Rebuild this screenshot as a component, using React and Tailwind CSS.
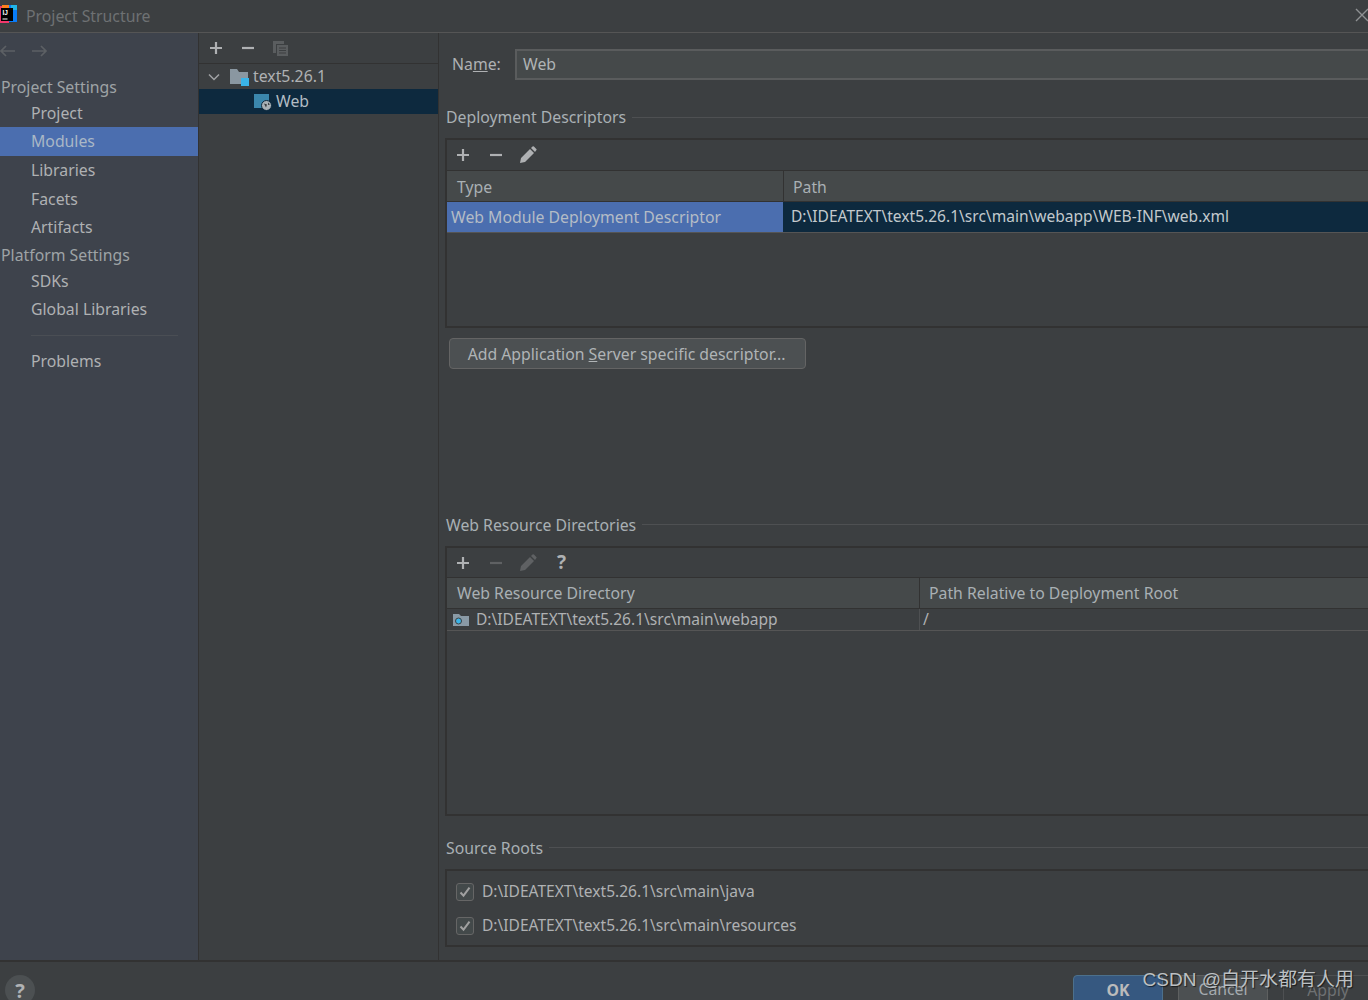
import React from 'react';

const FONT = 'font-["Noto_Sans","Open_Sans",sans-serif]';

const Plus = ({ dim }) => (
    <svg width="16" height="16" viewBox="0 0 16 16" className={dim ? 'opacity-40' : ''}>
        <path d="M8 2v12M2 8h12" stroke="#afb1b3" strokeWidth="2.2" fill="none" />
    </svg>
);

const Minus = ({ dim }) => (
    <svg width="16" height="16" viewBox="0 0 16 16" className={dim ? 'opacity-30' : ''}>
        <path d="M2 8h12" stroke="#afb1b3" strokeWidth="2.2" fill="none" />
    </svg>
);

const Pencil = ({ dim }) => (
    <svg width="18" height="18" viewBox="0 0 18 18" className={`-ml-[2px] ${dim ? 'opacity-30' : ''}`}>
        <path d="M1 17l1-5L11 3l4 4-9 9z M12 2l1.5-1.5a1 1 0 0 1 1.4 0l2.4 2.4a1 1 0 0 1 0 1.4L16 6z" fill="#afb1b3" />
    </svg>
);

const Check = () => (
    <div className="flex h-[18px] w-[18px] items-center justify-center rounded-[3px] border border-[#666666] bg-[#43494a]">
        <svg width="12" height="12" viewBox="0 0 12 12">
            <path d="M1.5 6.5l3 3.2 6-8" stroke="#a0a0a0" strokeWidth="2" fill="none" />
        </svg>
    </div>
);

const SectionTitle = ({ title, className = '', textClass = 'pt-[3px]' }) => (
    <div className={`flex h-5 items-center pl-px text-[#a9b0b4] ${className}`}>
        <span className={textClass}>{title}</span>
        <div className="ml-[6px] h-px flex-1 bg-[#4e5052]" />
    </div>
);

const NavItem = ({ label, active, h = 'h-[29px]', className = '' }) => (
    <div className={`flex items-center pl-[31px] pt-[1px] ${h} ${className} ${active ? 'bg-[#4b6eaf] text-[#a9b7c6]' : 'text-[#afb1b3]'}`}>{label}</div>
);

const NavHead = ({ label, h }) => (
    <div className={`flex items-end pl-px text-[#9ea3a6] ${h}`}>{label}</div>
);

export default function App() {
    return (
        <div className={`relative flex h-[1000px] w-[1368px] flex-col overflow-hidden bg-[#3c3f41] text-[15.8px] ${FONT}`}>
            {/* title bar */}
            <div className="flex h-[33px] shrink-0 items-center border-b border-[#555555] bg-[#3c3f41]">
                <svg width="18" height="20" viewBox="0 0 18 20" className="-mt-[5px] shrink-0">
                    <path d="M0 2h9v17H0z" fill="#f0386b" />
                    <path d="M2 1h8v4H2z" fill="#fc801d" />
                    <path d="M9 1h8v17H9z" fill="#087cfa" />
                    <path d="M11 1h6v5h-6z" fill="#21b5e8" />
                    <rect x="1" y="4" width="12" height="13" fill="#000000" />
                    <text x="2.5" y="10.500" fontSize="6.5" fontWeight="700" fill="#ffffff" fontFamily="Liberation Sans, sans-serif">IJ</text>
                    <path d="M2.500 14.500h5v1h-5z" fill="#ffffff" />
                </svg>
                <span className="ml-2 pt-[1px] text-[#6e7173]">Project Structure</span>
                <svg width="14" height="14" viewBox="0 0 14 14" className="ml-auto -mr-[1px] -mt-[2px]">
                    <path d="M1 1l12 12M13 1L1 13" stroke="#8f9193" strokeWidth="1.4" fill="none" />
                </svg>
            </div>

            <div className="flex min-h-0 flex-1">
                {/* left nav */}
                <div className="w-[198px] shrink-0 bg-[#3e434c]">
                    <div className="-ml-px flex h-[36px] items-center gap-[15px] pb-[1px]">
                        <svg width="17" height="14" viewBox="0 0 17 14">
                            <path d="M16 7H2M7 2L2 7l5 5" stroke="#5c6064" strokeWidth="1.7" fill="none" />
                        </svg>
                        <svg width="17" height="14" viewBox="0 0 17 14">
                            <path d="M1 7h14M10 2l5 5-5 5" stroke="#5c6064" strokeWidth="1.7" fill="none" />
                        </svg>
                    </div>
                    <NavHead label="Project Settings" h="h-[31px]" />
                    <NavItem label="Project" h="h-[27px]" />
                    <NavItem label="Modules" active />
                    <NavItem label="Libraries" />
                    <NavItem label="Facets" />
                    <NavItem label="Artifacts" h="h-[27px]" />
                    <NavHead label="Platform Settings" h="h-[27px]" />
                    <NavItem label="SDKs" h="h-[26px]" />
                    <NavItem label="Global Libraries" h="h-[31px]" />
                    <div className="ml-[31px] mr-[20px] mt-[10px] h-px bg-[#4a4e54]" />
                    <NavItem label="Problems" className="mt-[11px]" />
                </div>

                {/* module tree */}
                <div className="w-[241px] shrink-0 border-x border-[#323232] bg-[#3c3f41]">
                    <div className="flex h-[31px] items-center gap-4 border-b border-[#323232] pl-[9px]">
                        <Plus />
                        <Minus />
                        <svg width="17" height="17" viewBox="0 0 17 17">
                            <path d="M1 1h11v3H4v9H1z" fill="#5a5d5f" />
                            <path d="M5 5h11v11H5z" fill="#5a5d5f" />
                            <path d="M7 8h7M7 10.500h7M7 13h7" stroke="#3c3f41" strokeWidth="1" />
                        </svg>
                    </div>
                    <div className="flex h-[25px] items-center text-[#afb1b3]">
                        <svg width="12" height="8" viewBox="0 0 12 8" className="ml-[9px]">
                            <path d="M1 1.500l5 5 5-5" stroke="#a0a2a4" strokeWidth="1.500" fill="none" />
                        </svg>
                        <svg width="20" height="18" viewBox="0 0 20 18" className="ml-[9px]">
                            <path d="M1 1h7l2 3h9v12H1z" fill="#8a97a1" />
                            <path d="M12 10h8v8h-8z" fill="#3ab4e8" />
                        </svg>
                        <span className="ml-[4px]">text5.26.1</span>
                    </div>
                    <div className="flex h-[25px] items-center bg-[#0d293e] text-[#b3bcc4]">
                        <svg width="19" height="18" viewBox="0 0 19 18" className="ml-[54px]">
                            <path d="M1 1h15v14H1z" fill="#3b87ad" />
                            <circle cx="13.500" cy="12.500" r="5" fill="#a9b1b6" stroke="#0d293e" strokeWidth="1" />
                            <path d="M11 10.500l3 1-1 3zM15 9.500l2 2-2 .500z" fill="#35393c" />
                        </svg>
                        <span className="ml-[4px]">Web</span>
                    </div>
                </div>

                {/* module settings */}
                <div className="min-w-0 flex-1 pl-[6px] text-[#afb1b3]">
                    <div className="mt-[16px] flex h-[31px] items-center">
                        <span className="ml-[7px] w-[63px] text-[#afb1b3]">
                            Na<span className="underline">m</span>e:
                        </span>
                        <div className="-mr-[4px] flex h-[31px] flex-1 items-center border-2 border-[#5a5c5d] bg-[#45494a] pl-[6px] text-[#b0b4b6]">Web</div>
                    </div>

                    <SectionTitle title="Deployment Descriptors" className="mt-[27px]" textClass="pt-[1px]" />
                    <div className="mt-[11px] h-[190px] border-2 border-r-0 border-[#323232]">
                        <div className="flex h-[30px] items-center gap-[17px] pl-[8px]">
                            <Plus />
                            <Minus />
                            <Pencil />
                        </div>
                        <div className="flex h-[32px] border-y border-[#323232] bg-[#45494a] pt-[3px] text-[#a9b0b4]">
                            <div className="-mt-[3px] flex w-[337px] items-center border-r border-[#323232] pl-[10px] pt-[3px]">Type</div>
                            <div className="flex items-center pl-[9px]">Path</div>
                        </div>
                        <div className="flex h-[31px] border-b border-[#555555]">
                            <div className="flex w-[336px] items-center bg-[#4b6eaf] pl-[4px] pt-[1px] text-[#b4bcc6]">Web Module Deployment Descriptor</div>
                            <div className="flex flex-1 items-center bg-[#0d293e] pl-[8px] text-[15.55px] text-[#c3c9cd]">D:\IDEATEXT\text5.26.1\src\main\webapp\WEB-INF\web.xml</div>
                        </div>
                    </div>

                    <div className="ml-[4px] mt-[10px] flex h-[31px] w-[357px] items-center justify-center rounded-[4px] border border-[#646464] bg-[#4c5052] pr-[2px] pt-[2px] text-[#b0b4b6]">
                        <span>
                            Add Application <span className="underline">S</span>erver specific descriptor...
                        </span>
                    </div>

                    <SectionTitle title="Web Resource Directories" className="mt-[145px]" />
                    <div className="mt-[12px] h-[270px] border-2 border-r-0 border-[#323232]">
                        <div className="flex h-[29px] items-center gap-[17px] pl-[8px]">
                            <Plus />
                            <Minus dim />
                            <Pencil dim />
                            <span className="ml-[3px] text-[19px] font-bold leading-none text-[#afb1b3]">?</span>
                        </div>
                        <div className="flex h-[32px] border-y border-[#323232] bg-[#45494a] text-[#a9b0b4]">
                            <div className="flex w-[473px] items-center border-r border-[#323232] pl-[10px] pt-[2px]">Web Resource Directory</div>
                            <div className="flex items-center pl-[9px] pt-[2px]">Path Relative to Deployment Root</div>
                        </div>
                        <div className="flex h-[22px] border-b border-[#555555] text-[#afb1b3]">
                            <div className="flex w-[473px] items-center border-r border-[#4e5052] pl-[5px] pt-[1px] text-[15.55px]">
                                <svg width="18" height="14" viewBox="0 0 18 14">
                                    <path d="M1 1h6l2 2h8v10H1z" fill="#8a9aa6" />
                                    <circle cx="6.500" cy="8" r="3" fill="#3ab4e8" stroke="#3c3f41" strokeWidth="1" />
                                </svg>
                                <span className="ml-[6px]">D:\IDEATEXT\text5.26.1\src\main\webapp</span>
                            </div>
                            <div className="flex items-center pl-[3px]">/</div>
                        </div>
                    </div>

                    <SectionTitle title="Source Roots" className="mt-[21px]" />
                    <div className="mt-[12px] flex h-[78px] flex-col justify-center gap-[16px] border-2 border-r-0 border-[#323232] pl-[9px] pt-[2px] text-[15.55px]">
                        <div className="flex h-[18px] items-center gap-[8px]">
                            <Check />
                            <span>D:\IDEATEXT\text5.26.1\src\main\java</span>
                        </div>
                        <div className="flex h-[18px] items-center gap-[8px]">
                            <Check />
                            <span>D:\IDEATEXT\text5.26.1\src\main\resources</span>
                        </div>
                    </div>
                </div>
            </div>

            {/* footer */}
            <div className="flex h-[40px] shrink-0 border-t-2 border-[#323232] pt-[13px]">
                <div className="ml-[5px] flex h-[30px] w-[30px] shrink-0 items-center justify-center rounded-full bg-[#4c5052] pt-[2px] text-[20px] font-bold text-[#b0b2b4]">?</div>
                <div className="ml-[1038px] flex h-[30px] w-[90px] shrink-0 items-center justify-center rounded-[4px] border border-[#4c708c] bg-[#365880] pt-[2px] font-bold text-[#bbbbbb]">OK</div>
                <div className="ml-[15px] flex h-[30px] w-[90px] shrink-0 items-center justify-center rounded-[4px] border border-[#5e6060] bg-[#4c5052] text-[#a5abaf]">Cancel</div>
                <div className="ml-[15px] flex h-[30px] w-[90px] shrink-0 items-center justify-center rounded-[4px] border border-[#4e5052] pt-[1px] text-[#6e7173]">Apply</div>
            </div>

            {/* watermark */}
            <div className='absolute bottom-[7px] right-[14px] font-["Liberation_Sans","Noto_Sans_CJK_SC",sans-serif] text-[19px] leading-[26px] text-[#bcc0c3] [text-shadow:1px_1px_1px_rgba(0,0,0,0.6)]'>CSDN @白开水都有人用</div>
        </div>
    );
}
